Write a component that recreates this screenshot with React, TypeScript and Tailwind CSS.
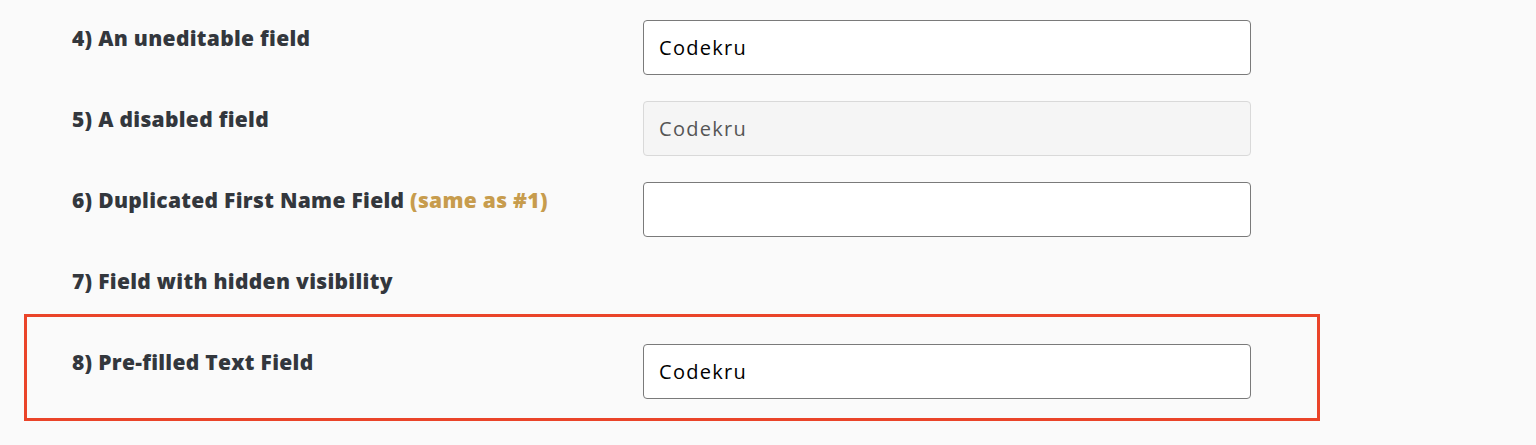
const font = { fontFamily: '"Open Sans", "Liberation Sans", sans-serif' }

type Row = {
  label: string
  note?: string
  value?: string
  disabled?: boolean
  hidden?: boolean
  highlight?: boolean
}

const rows: Row[] = [
  { label: '4) An uneditable field', value: 'Codekru' },
  { label: '5) A disabled field', value: 'Codekru', disabled: true },
  { label: '6) Duplicated First Name Field', note: '(same as #1)', value: '' },
  { label: '7) Field with hidden visibility', value: '', hidden: true },
  { label: '8) Pre-filled Text Field', value: 'Codekru', highlight: true },
]

function Field({ row }: { row: Row }) {
  const base =
    'h-[55px] w-[608px] rounded-[4px] border px-[15px] text-[20px] tracking-[1.3px] outline-none'
  if (row.hidden) return <input className={`${base} invisible`} readOnly />
  if (row.disabled)
    return (
      <input
        className={`${base} border-[#d9d9d9] bg-[#f5f5f5] text-[#555]`}
        style={font}
        defaultValue={row.value}
        disabled
      />
    )
  return (
    <input
      className={`${base} border-[#7a7a7a] bg-white text-black`}
      style={font}
      defaultValue={row.value}
      readOnly={!!row.value}
    />
  )
}

export default function App() {
  return (
    <div className="min-h-[445px] w-[1536px] bg-[#fafafa] pl-[72px] pt-[20px]">
      <div className="flex flex-col gap-[26px]">
        {rows.map((row) => (
          <div
            key={row.label}
            className="relative grid grid-cols-[571px_608px] items-start"
          >
            {row.highlight && (
              <div className="pointer-events-none absolute -left-[48px] -top-[30px] h-[107px] w-[1296px] border-[3px] border-[#ea4429]" />
            )}
            <label
              className="mt-[4px] whitespace-nowrap text-[21px] font-extrabold leading-[28px] tracking-[0.3px] text-[#33373d]"
              style={font}
            >
              {row.label}
              {row.note && <span className="text-[#c79c4d]"> {row.note}</span>}
            </label>
            <Field row={row} />
          </div>
        ))}
      </div>
    </div>
  )
}
